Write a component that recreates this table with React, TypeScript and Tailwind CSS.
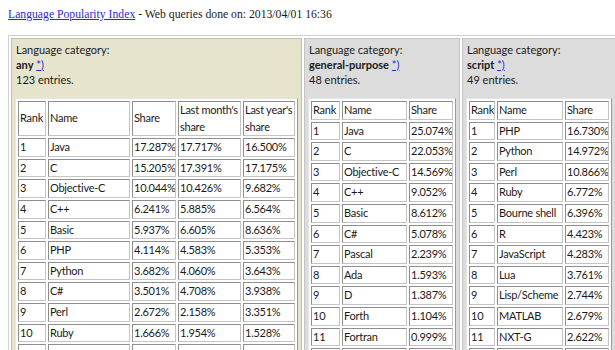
const t1 = [
  ["1", "Java", "17.287%", "17.717%", "16.500%"],
  ["2", "C", "15.205%", "17.391%", "17.175%"],
  ["3", "Objective-C", "10.044%", "10.426%", "9.682%"],
  ["4", "C++", "6.241%", "5.885%", "6.564%"],
  ["5", "Basic", "5.937%", "6.605%", "8.636%"],
  ["6", "PHP", "4.114%", "4.583%", "5.353%"],
  ["7", "Python", "3.682%", "4.060%", "3.643%"],
  ["8", "C#", "3.501%", "4.708%", "3.938%"],
  ["9", "Perl", "2.672%", "2.158%", "3.351%"],
  ["10", "Ruby", "1.666%", "1.954%", "1.528%"],
  ["", "", "", "", ""],
];

const t2 = [
  ["1", "Java", "25.074%"],
  ["2", "C", "22.053%"],
  ["3", "Objective-C", "14.569%"],
  ["4", "C++", "9.052%"],
  ["5", "Basic", "8.612%"],
  ["6", "C#", "5.078%"],
  ["7", "Pascal", "2.239%"],
  ["8", "Ada", "1.593%"],
  ["9", "D", "1.387%"],
  ["10", "Forth", "1.104%"],
  ["11", "Fortran", "0.999%"],
  ["", "", ""],
];

const t3 = [
  ["1", "PHP", "16.730%"],
  ["2", "Python", "14.972%"],
  ["3", "Perl", "10.866%"],
  ["4", "Ruby", "6.772%"],
  ["5", "Bourne shell", "6.396%"],
  ["6", "R", "4.423%"],
  ["7", "JavaScript", "4.283%"],
  ["8", "Lua", "3.761%"],
  ["9", "Lisp/Scheme", "2.744%"],
  ["10", "MATLAB", "2.679%"],
  ["11", "NXT-G", "2.622%"],
  ["", "", ""],
];

const cell =
  "border border-t-[#8e8e8e] border-l-[#8e8e8e] border-r-[#c4c4c4] border-b-[#c4c4c4] px-px py-0 leading-[16.6px] text-left font-normal whitespace-nowrap overflow-hidden";

function Category({
  name,
  entries,
  widths,
  head,
  rows,
}: {
  name: string;
  entries: number;
  widths: number[];
  head: React.ReactNode[];
  rows: string[][];
}) {
  return (
    <div>
      <div className="pl-px pt-[3px] leading-[15px]">
        Language category:
        <br />
        <b>{name}</b>{" "}
        <a href="#" className="text-[#2a2ad8] underline">
          *)
        </a>
        <br />
        {entries} entries.
      </div>
      <table
        className="mt-[11px] table-fixed border-separate border-spacing-[2px] border border-t-[#e4e4e4] border-l-[#e4e4e4] border-r-[#9a9a9a] border-b-[#9a9a9a] bg-white tracking-[-0.25px]"
        style={{ width: widths.reduce((a, b) => a + b, 0) + widths.length * 2 + 4 }}
      >
        <colgroup>
          {widths.map((w, i) => (
            <col key={i} style={{ width: w }} />
          ))}
        </colgroup>
        <thead>
          <tr>
            {head.map((h, i) => (
              <th key={i} className={cell}>
                {h}
              </th>
            ))}
          </tr>
        </thead>
        <tbody>
          {rows.map((r, i) => (
            <tr key={i}>
              {r.map((c, j) => (
                <td key={j} className={cell}>
                  {c || "\u00a0"}
                </td>
              ))}
            </tr>
          ))}
        </tbody>
      </table>
    </div>
  );
}

export default function App() {
  return (
    <div className="w-[615px] h-[350px] overflow-hidden bg-white px-[8px] text-[#1a1a1a]">
      <div className="pt-[6px] text-[11.7px] leading-[18px] font-['Liberation_Serif',serif]">
        <a href="#" className="text-[#2a2ad8] underline">
          Language Popularity Index
        </a>{" "}
        - Web queries done on: 2013/04/01 16:36
      </div>
      <table className="mt-[11px] border-separate border-spacing-[2px] border border-[#d0d0d0] text-[11px] font-['Lato',sans-serif]">
        <tbody>
          <tr>
            <td className="w-[290px] border border-[#c0c0b0] bg-[#e6e4cd] px-[3px] pt-0 pb-0 align-top">
              <Category
                name="any"
                entries={123}
                widths={[28, 82, 44, 63, 52]}
                head={[
                  "Rank",
                  "Name",
                  "Share",
                  <>
                    Last month's
                    <br />
                    share
                  </>,
                  <>
                    Last year's
                    <br />
                    share
                  </>,
                ]}
                rows={t1}
              />
            </td>
            <td className="w-[156px] border border-[#c4c4c4] bg-[#dcdcdc] px-[3px] align-top">
              <Category
                name="general-purpose"
                entries={48}
                widths={[29, 65, 44]}
                head={["Rank", "Name", "Share"]}
                rows={t2}
              />
            </td>
            <td className="w-[151px] border border-[#c4c4c4] bg-[#dcdcdc] px-[3px] align-top">
              <Category
                name="script"
                entries={49}
                widths={[26, 66, 44]}
                head={["Rank", "Name", "Share"]}
                rows={t3}
              />
            </td>
          </tr>
        </tbody>
      </table>
    </div>
  );
}
